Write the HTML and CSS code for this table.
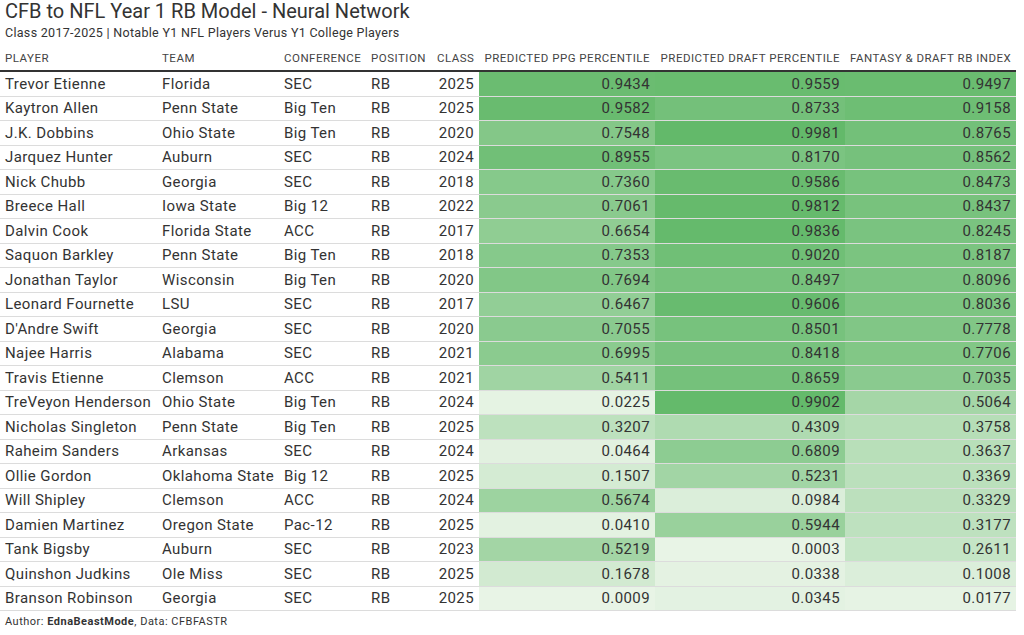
FILE: index.html
```html
<!DOCTYPE html>
<html>
<head>
<meta charset="utf-8">
<link rel="stylesheet" href="styles.css">
</head>
<body>
<div class="page">
  <h1 class="title">CFB to NFL Year 1 RB Model - Neural Network</h1>
  <p class="subtitle">Class 2017-2025 | Notable Y1 NFL Players Verus Y1 College Players</p>
  <table class="rb-table">
    <colgroup>
      <col class="c-player"><col class="c-team"><col class="c-conf"><col class="c-pos"><col class="c-class"><col class="c-ppg"><col class="c-draft"><col class="c-index">
    </colgroup>
    <thead>
      <tr>
        <th>Player</th><th>Team</th><th>Conference</th><th>Position</th><th class="num">Class</th><th class="num">Predicted PPG Percentile</th><th class="num">Predicted Draft Percentile</th><th class="num">Fantasy &amp; Draft RB Index</th>
      </tr>
    </thead>
    <tbody>
      <tr><td>Trevor Etienne</td><td>Florida</td><td>SEC</td><td>RB</td><td class="num">2025</td><td class="num heat" style="--v:0.9434">0.9434</td><td class="num heat" style="--v:0.9559">0.9559</td><td class="num heat" style="--v:0.9497">0.9497</td></tr>
      <tr><td>Kaytron Allen</td><td>Penn State</td><td>Big Ten</td><td>RB</td><td class="num">2025</td><td class="num heat" style="--v:0.9582">0.9582</td><td class="num heat" style="--v:0.8733">0.8733</td><td class="num heat" style="--v:0.9158">0.9158</td></tr>
      <tr><td>J.K. Dobbins</td><td>Ohio State</td><td>Big Ten</td><td>RB</td><td class="num">2020</td><td class="num heat" style="--v:0.7548">0.7548</td><td class="num heat" style="--v:0.9981">0.9981</td><td class="num heat" style="--v:0.8765">0.8765</td></tr>
      <tr><td>Jarquez Hunter</td><td>Auburn</td><td>SEC</td><td>RB</td><td class="num">2024</td><td class="num heat" style="--v:0.8955">0.8955</td><td class="num heat" style="--v:0.8170">0.8170</td><td class="num heat" style="--v:0.8562">0.8562</td></tr>
      <tr><td>Nick Chubb</td><td>Georgia</td><td>SEC</td><td>RB</td><td class="num">2018</td><td class="num heat" style="--v:0.7360">0.7360</td><td class="num heat" style="--v:0.9586">0.9586</td><td class="num heat" style="--v:0.8473">0.8473</td></tr>
      <tr><td>Breece Hall</td><td>Iowa State</td><td>Big 12</td><td>RB</td><td class="num">2022</td><td class="num heat" style="--v:0.7061">0.7061</td><td class="num heat" style="--v:0.9812">0.9812</td><td class="num heat" style="--v:0.8437">0.8437</td></tr>
      <tr><td>Dalvin Cook</td><td>Florida State</td><td>ACC</td><td>RB</td><td class="num">2017</td><td class="num heat" style="--v:0.6654">0.6654</td><td class="num heat" style="--v:0.9836">0.9836</td><td class="num heat" style="--v:0.8245">0.8245</td></tr>
      <tr><td>Saquon Barkley</td><td>Penn State</td><td>Big Ten</td><td>RB</td><td class="num">2018</td><td class="num heat" style="--v:0.7353">0.7353</td><td class="num heat" style="--v:0.9020">0.9020</td><td class="num heat" style="--v:0.8187">0.8187</td></tr>
      <tr><td>Jonathan Taylor</td><td>Wisconsin</td><td>Big Ten</td><td>RB</td><td class="num">2020</td><td class="num heat" style="--v:0.7694">0.7694</td><td class="num heat" style="--v:0.8497">0.8497</td><td class="num heat" style="--v:0.8096">0.8096</td></tr>
      <tr><td>Leonard Fournette</td><td>LSU</td><td>SEC</td><td>RB</td><td class="num">2017</td><td class="num heat" style="--v:0.6467">0.6467</td><td class="num heat" style="--v:0.9606">0.9606</td><td class="num heat" style="--v:0.8036">0.8036</td></tr>
      <tr><td>D'Andre Swift</td><td>Georgia</td><td>SEC</td><td>RB</td><td class="num">2020</td><td class="num heat" style="--v:0.7055">0.7055</td><td class="num heat" style="--v:0.8501">0.8501</td><td class="num heat" style="--v:0.7778">0.7778</td></tr>
      <tr><td>Najee Harris</td><td>Alabama</td><td>SEC</td><td>RB</td><td class="num">2021</td><td class="num heat" style="--v:0.6995">0.6995</td><td class="num heat" style="--v:0.8418">0.8418</td><td class="num heat" style="--v:0.7706">0.7706</td></tr>
      <tr><td>Travis Etienne</td><td>Clemson</td><td>ACC</td><td>RB</td><td class="num">2021</td><td class="num heat" style="--v:0.5411">0.5411</td><td class="num heat" style="--v:0.8659">0.8659</td><td class="num heat" style="--v:0.7035">0.7035</td></tr>
      <tr><td>TreVeyon Henderson</td><td>Ohio State</td><td>Big Ten</td><td>RB</td><td class="num">2024</td><td class="num heat" style="--v:0.0225">0.0225</td><td class="num heat" style="--v:0.9902">0.9902</td><td class="num heat" style="--v:0.5064">0.5064</td></tr>
      <tr><td>Nicholas Singleton</td><td>Penn State</td><td>Big Ten</td><td>RB</td><td class="num">2025</td><td class="num heat" style="--v:0.3207">0.3207</td><td class="num heat" style="--v:0.4309">0.4309</td><td class="num heat" style="--v:0.3758">0.3758</td></tr>
      <tr><td>Raheim Sanders</td><td>Arkansas</td><td>SEC</td><td>RB</td><td class="num">2024</td><td class="num heat" style="--v:0.0464">0.0464</td><td class="num heat" style="--v:0.6809">0.6809</td><td class="num heat" style="--v:0.3637">0.3637</td></tr>
      <tr><td>Ollie Gordon</td><td>Oklahoma State</td><td>Big 12</td><td>RB</td><td class="num">2025</td><td class="num heat" style="--v:0.1507">0.1507</td><td class="num heat" style="--v:0.5231">0.5231</td><td class="num heat" style="--v:0.3369">0.3369</td></tr>
      <tr><td>Will Shipley</td><td>Clemson</td><td>ACC</td><td>RB</td><td class="num">2024</td><td class="num heat" style="--v:0.5674">0.5674</td><td class="num heat" style="--v:0.0984">0.0984</td><td class="num heat" style="--v:0.3329">0.3329</td></tr>
      <tr><td>Damien Martinez</td><td>Oregon State</td><td>Pac-12</td><td>RB</td><td class="num">2025</td><td class="num heat" style="--v:0.0410">0.0410</td><td class="num heat" style="--v:0.5944">0.5944</td><td class="num heat" style="--v:0.3177">0.3177</td></tr>
      <tr><td>Tank Bigsby</td><td>Auburn</td><td>SEC</td><td>RB</td><td class="num">2023</td><td class="num heat" style="--v:0.5219">0.5219</td><td class="num heat" style="--v:0.0003">0.0003</td><td class="num heat" style="--v:0.2611">0.2611</td></tr>
      <tr><td>Quinshon Judkins</td><td>Ole Miss</td><td>SEC</td><td>RB</td><td class="num">2025</td><td class="num heat" style="--v:0.1678">0.1678</td><td class="num heat" style="--v:0.0338">0.0338</td><td class="num heat" style="--v:0.1008">0.1008</td></tr>
      <tr><td>Branson Robinson</td><td>Georgia</td><td>SEC</td><td>RB</td><td class="num">2025</td><td class="num heat" style="--v:0.0009">0.0009</td><td class="num heat" style="--v:0.0345">0.0345</td><td class="num heat" style="--v:0.0177">0.0177</td></tr>
    </tbody>
  </table>
  <p class="source">Author: <strong>EdnaBeastMode</strong>, Data: CFBFASTR</p>
</div>
</body>
</html>
```

FILE: styles.css
```css
html, body {
  margin: 0;
  padding: 0;
  background: #ffffff;
}

.page {
  width: 1016px;
  font-family: Roboto, "Liberation Sans", sans-serif;
  color: #333333;
}

.title {
  margin: 0;
  padding: 0 5px;
  height: 22px;
  line-height: 22px;
  font-size: 20px;
  font-weight: 400;
  color: #333333;
}

.subtitle {
  margin: 0;
  padding: 0 5px;
  height: 22px;
  line-height: 22px;
  font-size: 12.5px;
  letter-spacing: 0.3px;
  color: #333333;
}

.rb-table {
  width: 1016px;
  table-layout: fixed;
  border-collapse: collapse;
}

.c-player { width: 157px; }
.c-team { width: 122px; }
.c-conf { width: 87px; }
.c-pos { width: 66px; }
.c-class { width: 47px; }
.c-ppg { width: 176px; }
.c-draft { width: 190px; }
.c-index { width: 171px; }

.rb-table th {
  height: 25px;
  padding: 1px 5px 0;
  line-height: 14px;
  text-align: left;
  vertical-align: middle;
  font-size: 11.5px;
  font-weight: 400;
  letter-spacing: 0.5px;
  text-transform: uppercase;
  color: #444444;
  white-space: nowrap;
  border-bottom: 2px solid #333333;
}

.rb-table td {
  height: 22.5px;
  padding: 1px 5px 0;
  line-height: 17px;
  font-size: 15px;
  letter-spacing: 0.4px;
  color: #333333;
  white-space: nowrap;
  border-bottom: 1px solid #dcdcdc;
}

.rb-table .num {
  text-align: right;
}

.rb-table td.heat {
  background: color-mix(in srgb, #63b96a calc(var(--v) * 100%), #e8f4e6);
}

.source {
  margin: 0;
  padding: 0 5px;
  height: 22px;
  line-height: 22px;
  font-size: 11px;
  letter-spacing: 0.5px;
  color: #333333;
}
```
